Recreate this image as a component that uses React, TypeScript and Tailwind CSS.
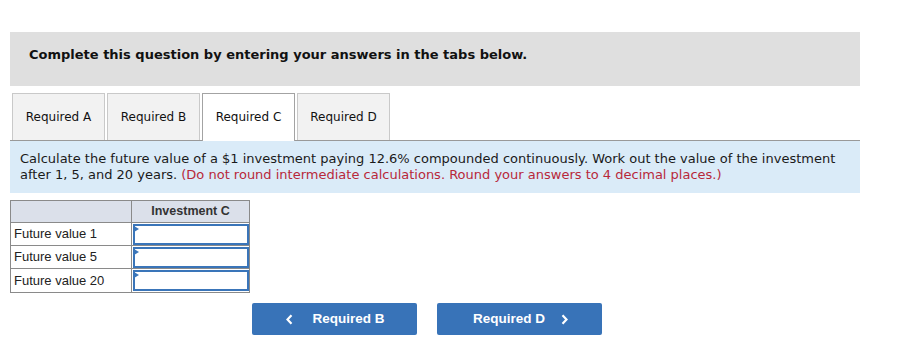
import React from "react";

const Chevron = ({ dir }: { dir: "left" | "right" }) => (
  <svg width="7" height="11" viewBox="0 0 7 11" className="shrink-0">
    {dir === "left" ? (
      <polyline points="5.5,1.2 1.5,5.5 5.5,9.8" fill="none" stroke="white" strokeWidth="2.2" />
    ) : (
      <polyline points="1.5,1.2 5.5,5.5 1.5,9.8" fill="none" stroke="white" strokeWidth="2.2" />
    )}
  </svg>
);

const InputCell = () => (
  <div className="flex-1 pt-[1px] pl-[1px]">
    <div className="relative h-[21px] w-full border-2 border-[#3a75b9] bg-white">
      <div className="absolute -left-[1px] top-0 h-0 w-0 border-y-[3px] border-y-transparent border-l-[5px] border-l-[#3a75b9]" />
    </div>
  </div>
);

export default function App() {
  const tabs = ["Required A", "Required B", "Required C", "Required D"];
  const rows = ["Future value 1", "Future value 5", "Future value 20"];
  return (
    <div className="w-[910px] h-[361px] bg-white pt-[32px] px-[10px] font-['DejaVu_Sans',Verdana,sans-serif] text-[#111]">
      <div className="w-[850px] h-[54px] bg-[#dfdfdf] flex items-center pl-[19px] pb-[9px] font-bold text-[13px]">
        Complete this question by entering your answers in the tabs below.
      </div>

      <div className="mt-[7px] w-[850px] h-[48px] flex items-end gap-[2px] pl-[2px] border-b border-[#999999]">
        {tabs.map((t) =>
          t === "Required C" ? (
            <div
              key={t}
              className="w-[93px] h-[48px] -mb-px bg-white border border-b-0 border-[#a3a3a3] flex items-center justify-center text-[12px] pb-[1px]"
            >
              {t}
            </div>
          ) : (
            <div
              key={t}
              className="w-[93px] h-[47px] bg-[#f2f2f2] border border-b-0 border-[#c9c9c9] flex items-center justify-center text-[12px]"
            >
              {t}
            </div>
          )
        )}
      </div>

      <div className="w-[850px] bg-[#daebf8] px-[10px] py-[10px] text-[13px] leading-[16px] text-[#1a1a1a]">
        Calculate the future value of a $1 investment paying 12.6% compounded continuously. Work out the value of the investment after 1, 5, and 20 years.{" "}
        <span className="text-[#b8283a]">(Do not round intermediate calculations. Round your answers to 4 decimal places.)</span>
      </div>

      <div className="mt-[7px] w-[240px] border border-[#8a8a8a] font-['Liberation_Sans',Arial,sans-serif] text-[13px] text-[#222]">
        <div className="flex h-[22px] bg-[#dbe0ea] border-b border-[#8a8a8a]">
          <div className="w-[121px] border-r border-[#8a8a8a]" />
          <div className="flex-1 flex items-center justify-center font-bold text-[12.5px] text-[#333] pb-[1px]">
            Investment C
          </div>
        </div>
        {rows.map((r, i) => (
          <div key={r} className={`flex h-[23px] ${i < rows.length - 1 ? "border-b border-[#8a8a8a]" : ""}`}>
            <div className="w-[121px] border-r border-[#8a8a8a] flex items-center pl-[3px]">{r}</div>
            <InputCell />
          </div>
        ))}
      </div>

      <div className="mt-[10px] ml-[242px] flex gap-[20px] font-['Liberation_Sans',Arial,sans-serif]">
        <button className="w-[165px] h-[32px] rounded-[2px] bg-[#3873b8] text-white font-bold text-[13.5px] flex items-center justify-center gap-[19px] pl-[2px]">
          <Chevron dir="left" />
          <span>Required B</span>
        </button>
        <button className="w-[165px] h-[32px] rounded-[2px] bg-[#3873b8] text-white font-bold text-[13.5px] flex items-center justify-center gap-[16px] pl-[2px]">
          <span>Required D</span>
          <Chevron dir="right" />
        </button>
      </div>
    </div>
  );
}
